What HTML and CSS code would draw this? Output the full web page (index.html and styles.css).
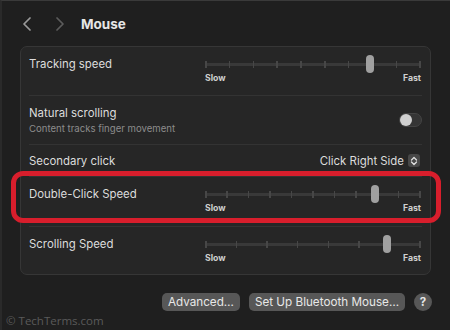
FILE: index.html
```html
<!DOCTYPE html>
<html>
<head>
<meta charset="utf-8">
<link rel="stylesheet" href="styles.css">
</head>
<body>
<div class="window">
  <div class="header">
    <svg class="nav" width="44" height="14" viewBox="0 0 44 14">
      <polyline points="8,1 2,7 8,13" fill="none" stroke="#9a9a9a" stroke-width="1.7" stroke-linecap="round" stroke-linejoin="round"/>
      <polyline points="35,1 41,7 35,13" fill="none" stroke="#5c5c5c" stroke-width="1.7" stroke-linecap="round" stroke-linejoin="round"/>
    </svg>
    <span class="title">Mouse</span>
  </div>

  <div class="card">
    <div class="row slider-row r1">
      <span class="label">Tracking speed</span>
      <div class="slider">
        <div class="track">
          <div class="ticks"><i></i><i></i><i></i><i></i><i></i><i></i><i></i><i></i><i></i><i></i></div>
          <div class="thumb" style="left:165px"></div>
        </div>
        <div class="ends"><span>Slow</span><span>Fast</span></div>
      </div>
    </div>

    <div class="row r2">
      <div class="textcol">
        <span class="label">Natural scrolling</span>
        <span class="sub">Content tracks finger movement</span>
      </div>
      <div class="toggle"><div class="knob"></div></div>
    </div>

    <div class="row r3">
      <span class="label">Secondary click</span>
      <div class="popup">
        <span class="label">Click Right Side</span>
        <span class="stepper">
          <svg width="8" height="10" viewBox="0 0 8 10">
            <polyline points="1.5,4 4,1.5 6.5,4" fill="none" stroke="#e0e0e0" stroke-width="1.3" stroke-linecap="round" stroke-linejoin="round"/>
            <polyline points="1.5,6 4,8.5 6.5,6" fill="none" stroke="#e0e0e0" stroke-width="1.3" stroke-linecap="round" stroke-linejoin="round"/>
          </svg>
        </span>
      </div>
    </div>

    <div class="row slider-row r4">
      <span class="label">Double-Click Speed</span>
      <div class="slider">
        <div class="track">
          <div class="ticks"><i></i><i></i><i></i><i></i><i></i><i></i><i></i><i></i><i></i><i></i><i></i></div>
          <div class="thumb" style="left:170px"></div>
        </div>
        <div class="ends"><span>Slow</span><span>Fast</span></div>
      </div>
      <div class="highlight"></div>
    </div>

    <div class="row slider-row r5 last">
      <span class="label">Scrolling Speed</span>
      <div class="slider">
        <div class="track">
          <div class="ticks"><i></i><i></i><i></i><i></i><i></i><i></i><i></i><i></i></div>
          <div class="thumb" style="left:182px"></div>
        </div>
        <div class="ends"><span>Slow</span><span>Fast</span></div>
      </div>
    </div>
  </div>

  <div class="buttons">
    <span class="btn">Advanced…</span>
    <span class="btn">Set Up Bluetooth Mouse…</span>
    <span class="help">?</span>
  </div>

  <div class="watermark">© TechTerms.com</div>
</div>
</body>
</html>
```

FILE: styles.css
```css
html, body {
  margin: 0;
  padding: 0;
}
body {
  width: 450px;
  height: 330px;
  overflow: hidden;
  background: #1f1f1f;
  font-family: Inter, "Noto Sans", sans-serif;
  color: #dedede;
}
.window {
  position: relative;
  width: 450px;
  height: 330px;
  box-sizing: border-box;
  border-top: 1px solid #3a3a3a;
  border-left: 2px solid #2a2a2a;
}
.header {
  display: flex;
  align-items: center;
  height: 45px;
  padding-left: 20px;
  box-sizing: border-box;
}
.nav {
  display: block;
  margin-right: 15px;
}
.title {
  font-size: 13.5px;
  font-weight: 700;
  color: #e6e6e6;
}
.card {
  margin-left: 18px;
  width: 411px;
  box-sizing: border-box;
  background: #262626;
  border: 1px solid #363636;
  border-radius: 7px;
  padding: 0 8px;
}
.row {
  position: relative;
  display: flex;
  justify-content: space-between;
  align-items: center;
  border-bottom: 1px solid #333333;
  box-sizing: border-box;
}
.row.last {
  border-bottom: none;
}
.slider-row {
  align-items: flex-start;
}
.label {
  font-size: 11.4px;
  color: #dcdcdc;
  line-height: 14px;
}
.slider-row > .label {
  margin-top: 10px;
}
.r1 { height: 49px; }
.r2 { height: 49px; }
.r3 { height: 32px; }
.r4 { height: 50px; }
.r5 { height: 47px; }
.textcol {
  display: flex;
  flex-direction: column;
}
.sub {
  font-size: 9.6px;
  color: #8c8c8c;
  line-height: 13px;
  margin-top: 2px;
}
.slider {
  width: 216px;
  margin-right: 1px;
  padding-top: 13px;
}
.track {
  position: relative;
  height: 8px;
}
.track::before {
  content: "";
  position: absolute;
  left: 0;
  right: 0;
  top: 2.5px;
  height: 3px;
  background: #393939;
  border-radius: 1.5px;
}
.ticks {
  position: relative;
  display: flex;
  justify-content: space-between;
  height: 8px;
}
.ticks i {
  display: block;
  width: 1.5px;
  height: 7px;
  margin-top: 0.5px;
  background: #474747;
}
.thumb {
  position: absolute;
  top: -5px;
  width: 8px;
  height: 18px;
  margin-left: -4px;
  background: #a0a0a0;
  border-radius: 4px;
}
.ends {
  display: flex;
  justify-content: space-between;
  margin-top: 5px;
  font-size: 8.7px;
  font-weight: 700;
  color: #cfcfcf;
  line-height: 11px;
}
.toggle {
  width: 23px;
  height: 14px;
  box-sizing: border-box;
  background: #353535;
  border: 1px solid #444;
  border-radius: 7px;
}
.knob {
  width: 12px;
  height: 12px;
  border-radius: 6px;
  background: #d0d0d0;
}
.popup {
  display: flex;
  align-items: center;
  gap: 4px;
  margin-right: 2px;
}
.stepper {
  display: flex;
  align-items: center;
  justify-content: center;
  width: 12px;
  height: 13px;
  background: #484848;
  border-radius: 3px;
}
.stepper svg {
  display: block;
}
.highlight {
  position: absolute;
  left: -18px;
  right: -19px;
  top: -6px;
  bottom: 3px;
  border: 5px solid #d81e2c;
  border-radius: 12px;
  pointer-events: none;
}
.buttons {
  display: flex;
  justify-content: flex-end;
  align-items: center;
  gap: 9px;
  padding-right: 18px;
  margin-top: 18px;
}
.btn {
  display: flex;
  align-items: center;
  height: 18px;
  padding: 0 6px;
  background: #575757;
  border-radius: 5px;
  font-size: 11.7px;
  color: #e8e8e8;
}
.help {
  display: flex;
  align-items: center;
  justify-content: center;
  width: 18px;
  height: 18px;
  border-radius: 9px;
  background: #575757;
  font-size: 11.5px;
  font-weight: 700;
  color: #e8e8e8;
}
.watermark {
  position: absolute;
  left: 4px;
  bottom: 2px;
  font-size: 11.5px;
  color: #5a5a5a;
  font-family: "Open Sans", "Noto Sans", sans-serif;
}
```
